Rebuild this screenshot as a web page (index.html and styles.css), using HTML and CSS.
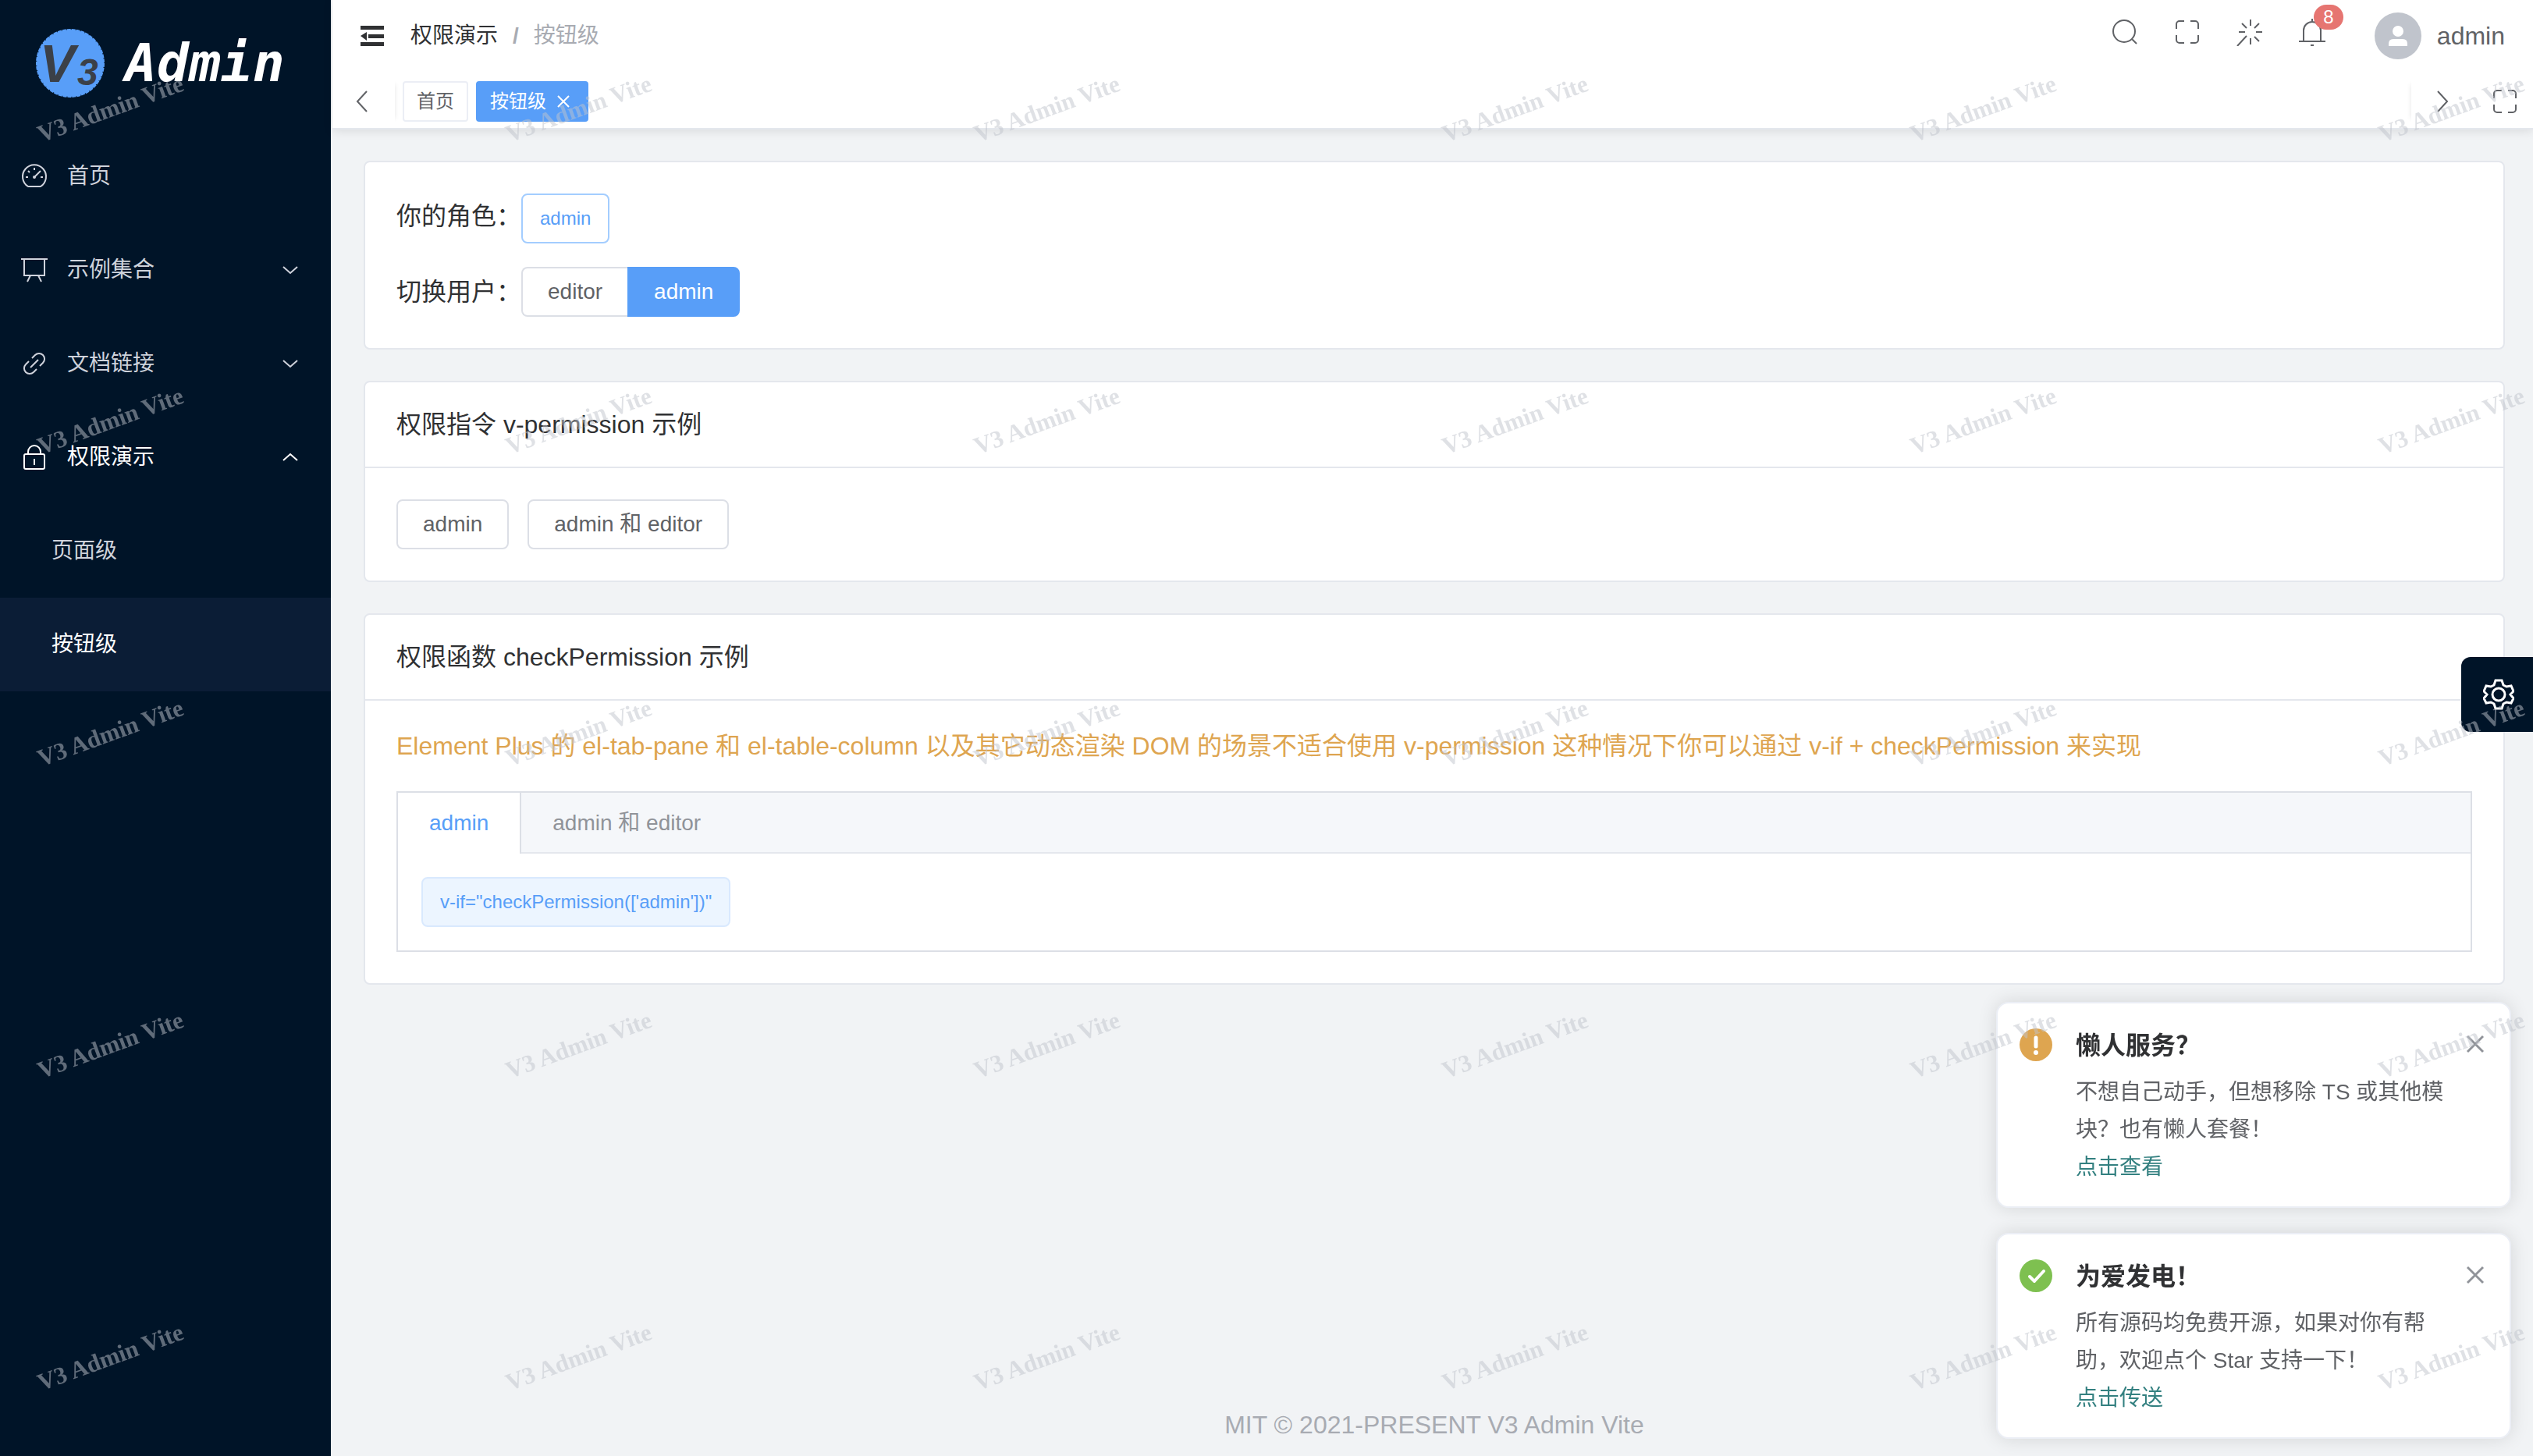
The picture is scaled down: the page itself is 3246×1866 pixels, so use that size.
FILE: index.html
```html
<!DOCTYPE html>
<html lang="zh-CN">
<head>
  <meta charset="UTF-8" />
  <meta name="viewport" content="width=device-width, initial-scale=1" />
  <title>V3 Admin Vite</title>
  <link rel="stylesheet" href="styles.css">
</head>
<body>
  <!-- shared icons -->
  <svg class="sprite" aria-hidden="true">
    <symbol id="icon-fullscreen" viewBox="0 0 36 36">
      <path d="M4 14V8a4 4 0 0 1 4-4h6M22 4h6a4 4 0 0 1 4 4v6M32 22v6a4 4 0 0 1-4 4h-6M14 32H8a4 4 0 0 1-4-4v-6" />
    </symbol>
    <symbol id="icon-down" viewBox="0 0 24 24">
      <path d="M3 8l9 8 9-8" />
    </symbol>
    <symbol id="icon-close" viewBox="0 0 28 28">
      <path d="M7 7l14 14M21 7L7 21" />
    </symbol>
  </svg>

  <aside class="sidebar">
    <a class="logo" href="#" aria-label="V3 Admin">
      <svg class="logo-mark" viewBox="0 0 88 88">
        <circle cx="44" cy="44" r="43" fill="#589ef8" stroke="#589ef8" stroke-width="2" stroke-dasharray="5 1" />
        <text x="5" y="68" class="logo-v">V</text>
        <text x="53" y="72" class="logo-3">3</text>
      </svg>
      <span class="logo-text">Admin</span>
    </a>

    <nav class="menu">
      <a href="#" class="menu-item">
        <svg class="icon" viewBox="0 0 36 36">
          <path d="M10 31a15 15 0 1 1 16 0z" />
          <path d="M18 7v3M7 19h3M26 19h3M10 11l2 2M18 19l8-8" />
          <circle cx="18" cy="19" r="1" />
        </svg>
        <span>首页</span>
      </a>
      <a href="#" class="menu-item">
        <svg class="icon" viewBox="0 0 36 36">
          <path d="M1 4h34M5 4v21h26V4M13 25l-4 8M23 25l4 8" />
        </svg>
        <span>示例集合</span>
        <svg class="icon arrow"><use href="#icon-down" /></svg>
      </a>
      <a href="#" class="menu-item">
        <svg class="icon" viewBox="0 0 36 36">
          <path d="M13 23l10-10M15 11l4-4a7 7 0 0 1 10 10l-4 4M21 25l-4 4A7 7 0 0 1 7 19l4-4" />
        </svg>
        <span>文档链接</span>
        <svg class="icon arrow"><use href="#icon-down" /></svg>
      </a>
      <a href="#" class="menu-item open">
        <svg class="icon" viewBox="0 0 36 36">
          <rect x="5" y="14" width="26" height="19" rx="2" />
          <path d="M10 14v-3a8 8 0 0 1 16 0v3M18 20v8" />
        </svg>
        <span>权限演示</span>
        <svg class="icon arrow"><use href="#icon-down" /></svg>
      </a>
      <a href="#" class="menu-item sub">页面级</a>
      <a href="#" class="menu-item sub active">按钮级</a>
    </nav>
  </aside>

  <div class="page">
    <header class="header">
      <div class="navbar">
        <button class="icon-btn" aria-label="折叠菜单">
          <svg class="fold" viewBox="0 0 30 26">
            <path d="M0 0h30v5H0zM10 11h20v5H10zM0 21h30v5H0zM8 8v11L0 13z" />
          </svg>
        </button>
        <div class="breadcrumb">
          <a href="#">权限演示</a>
          <span class="separator">/</span>
          <span class="current">按钮级</span>
        </div>
        <div class="tools">
          <button class="icon-btn" aria-label="搜索">
            <svg class="icon" viewBox="0 0 36 36"><circle cx="17" cy="17" r="14" /><path d="M27 27l6 6" /></svg>
          </button>
          <button class="icon-btn" aria-label="全屏">
            <svg class="icon"><use href="#icon-fullscreen" /></svg>
          </button>
          <button class="icon-btn" aria-label="主题">
            <svg class="icon" viewBox="0 0 36 36">
              <path d="M19 2v8M19 26v8M4 18h8M26 18h8M8 7l6 6M30 7l-6 6M24 24l6 6M14 23L2 36" />
            </svg>
          </button>
          <button class="icon-btn bell" aria-label="通知">
            <svg class="icon" viewBox="0 0 36 36">
              <path d="M1 30h34M7 30V16a11 11 0 0 1 22 0v14M18 1v4M16 35h4" />
            </svg>
            <span class="badge">8</span>
          </button>
          <a href="#" class="user">
            <svg class="avatar" viewBox="0 0 60 60">
              <circle cx="30" cy="30" r="30" fill="#c0c4cc" />
              <circle cx="30" cy="24" r="7" fill="#fff" />
              <path d="M18 43v-3q0-6 6-6h12q6 0 6 6v3z" fill="#fff" />
            </svg>
            <span>admin</span>
          </a>
        </div>
      </div>

      <div class="tags-bar">
        <button class="icon-btn scroll-btn left" aria-label="向左">
          <svg class="icon" viewBox="0 0 36 36"><path d="M24 5L12 18l12 13" /></svg>
        </button>
        <div class="tags">
          <a href="#" class="page-tag">首页</a>
          <a href="#" class="page-tag active">按钮级<svg class="icon close"><use href="#icon-close" /></svg></a>
        </div>
        <div class="tags-right">
          <button class="icon-btn" aria-label="向右">
            <svg class="icon" viewBox="0 0 36 36"><path d="M12 5l12 13-12 13" /></svg>
          </button>
          <button class="icon-btn" aria-label="内容区全屏">
            <svg class="icon"><use href="#icon-fullscreen" /></svg>
          </button>
        </div>
      </div>
    </header>

    <main class="content">
      <section class="card">
        <div class="card-body roles">
          <div class="role-row text-row">
            <span>你的角色：</span>
            <span class="tag plain">admin</span>
          </div>
          <div class="role-row">
            <span id="switch-label">切换用户：</span>
            <div class="radio-group" role="radiogroup" aria-labelledby="switch-label">
              <input type="radio" name="role" id="role-editor">
              <label for="role-editor">editor</label>
              <input type="radio" name="role" id="role-admin" checked>
              <label for="role-admin">admin</label>
            </div>
          </div>
        </div>
      </section>

      <section class="card">
        <div class="card-header">权限指令 v-permission 示例</div>
        <div class="card-body buttons">
          <button class="btn">admin</button>
          <button class="btn">admin 和 editor</button>
        </div>
      </section>

      <section class="card">
        <div class="card-header">权限函数 checkPermission 示例</div>
        <div class="card-body">
          <p class="warning">Element Plus 的 el-tab-pane 和 el-table-column 以及其它动态渲染 DOM 的场景不适合使用 v-permission 这种情况下你可以通过 v-if + checkPermission 来实现</p>
          <div class="tabs">
            <div class="tabs-header" role="tablist">
              <button class="tab active" role="tab" aria-selected="true">admin</button>
              <button class="tab" role="tab" aria-selected="false">admin 和 editor</button>
            </div>
            <div class="tabs-content" role="tabpanel">
              <span class="tag">v-if="checkPermission(['admin'])"</span>
            </div>
          </div>
        </div>
      </section>
    </main>

    <footer class="footer">MIT © 2021-PRESENT V3 Admin Vite</footer>
  </div>

  <button class="settings" aria-label="设置">
    <svg class="icon" viewBox="0 0 40 40">
      <path d="M16 2h8l2 6 4 2 6-1 3 7-4 4 4 5-3 6-6-1-4 2-2 6h-8l-2-6-4-2-6 1-3-6 4-5-4-4 3-7 6 1 4-2z" />
      <circle cx="20" cy="20" r="8" />
    </svg>
  </button>

  <div class="notifications">
    <div class="notice" role="alert">
      <svg class="notice-icon" viewBox="0 0 42 42">
        <circle cx="21" cy="21" r="21" fill="#dea550" />
        <path d="M21 12v11" stroke="#fff" stroke-width="5" stroke-linecap="round" />
        <circle cx="21" cy="31" r="3" fill="#fff" />
      </svg>
      <div class="notice-text">
        <h2>懒人服务？</h2>
        <p>不想自己动手，但想移除 TS 或其他模块？也有懒人套餐！</p>
        <a href="#">点击查看</a>
      </div>
      <button class="icon-btn notice-close" aria-label="关闭">
        <svg class="icon"><use href="#icon-close" /></svg>
      </button>
    </div>
    <div class="notice" role="alert">
      <svg class="notice-icon" viewBox="0 0 42 42">
        <circle cx="21" cy="21" r="21" fill="#7ec050" />
        <path d="M13 22l6 6 12-13" fill="none" stroke="#fff" stroke-width="4" stroke-linecap="round" stroke-linejoin="round" />
      </svg>
      <div class="notice-text">
        <h2>为爱发电！</h2>
        <p>所有源码均免费开源，如果对你有帮助，欢迎点个 Star 支持一下！</p>
        <a href="#">点击传送</a>
      </div>
      <button class="icon-btn notice-close" aria-label="关闭">
        <svg class="icon"><use href="#icon-close" /></svg>
      </button>
    </div>
  </div>

  <svg class="watermark" aria-hidden="true">
    <defs>
      <pattern id="mark" width="600" height="400" patternUnits="userSpaceOnUse">
        <text x="145" y="149" text-anchor="middle" transform="rotate(-20 145 149)">V3 Admin Vite</text>
      </pattern>
    </defs>
    <rect width="100%" height="100%" fill="url(#mark)" />
  </svg>
</body>
</html>
```

FILE: styles.css
```css
:root {
  --primary: #589ef8;
  --text: #303133;
  --text-regular: #606266;
  --text-muted: #909399;
  --placeholder: #a8abb2;
  --border: #dcdfe6;
  --border-light: #e4e7ed;
  --bg: #f1f3f5;
  --sidebar-bg: #001428;
  --sidebar-active: #0b1d36;
  --radius: 8px;
}

* {
  box-sizing: border-box;
}

body {
  margin: 0;
  min-height: 100vh;
  display: flex;
  background: var(--bg);
  color: var(--text);
  font-family: "Liberation Sans", "Noto Sans CJK SC", sans-serif;
  font-size: 32px;
  line-height: 36px;
}

a {
  color: inherit;
  text-decoration: none;
}

button {
  font: inherit;
  color: inherit;
  cursor: pointer;
}

.sprite {
  position: absolute;
  width: 0;
  height: 0;
}

.icon {
  display: block;
  width: 36px;
  height: 36px;
  flex: none;
  fill: none;
  stroke: currentColor;
  stroke-width: 2;
}

.icon-btn {
  display: flex;
  padding: 0;
  border: none;
  background: none;
  color: var(--text-regular);
}

/* sidebar */
.sidebar {
  width: 424px;
  flex: none;
  background: var(--sidebar-bg);
}

.logo {
  display: flex;
  align-items: center;
  gap: 26px;
  height: 166px;
  padding: 0 0 4px 46px;
  color: #fff;
}

.logo-mark {
  width: 88px;
  height: 88px;
}

.logo-v,
.logo-3 {
  font-family: "Liberation Sans Narrow", "Liberation Sans", sans-serif;
  font-weight: 700;
  font-style: italic;
  fill: #3b4048;
}

.logo-v {
  font-size: 68px;
}

.logo-3 {
  font-size: 48px;
}

.logo-text {
  font-family: "DejaVu Sans Mono", monospace;
  font-size: 68px;
  font-weight: 700;
  font-style: italic;
  line-height: 80px;
}

.menu-item {
  display: flex;
  align-items: center;
  gap: 24px;
  height: 120px;
  padding: 0 40px 0 26px;
  color: #cfd3dc;
  font-size: 28px;
}

.menu-item .arrow {
  width: 24px;
  height: 24px;
  margin-left: auto;
}

.menu-item.open {
  color: #fff;
}

.menu-item.open .arrow {
  transform: rotate(180deg);
}

.menu-item.sub {
  padding-left: 66px;
}

.menu-item.active {
  background: var(--sidebar-active);
  color: #fff;
}

/* header */
.page {
  flex: 1;
  min-width: 0;
  margin-left: 2px;
  display: flex;
  flex-direction: column;
}

.header {
  background: #fff;
  border-bottom: 2px solid var(--border-light);
  box-shadow: 0 2px 12px rgba(0, 0, 0, 0.1);
}

.navbar {
  display: flex;
  align-items: center;
  height: 92px;
  padding: 0 36px;
}

.fold {
  width: 30px;
  height: 26px;
  fill: var(--text);
}

.breadcrumb {
  display: flex;
  gap: 19px;
  margin-left: 34px;
  font-size: 28px;
}

.separator {
  color: var(--placeholder);
  font-weight: 700;
}

.current {
  color: var(--placeholder);
}

.tools {
  display: flex;
  align-items: center;
  gap: 44px;
  margin-left: auto;
}

.tools > .icon-btn {
  padding-bottom: 10px;
}

.bell {
  position: relative;
}

.badge {
  position: absolute;
  top: -17px;
  left: 20px;
  width: 38px;
  height: 32px;
  border-radius: 16px;
  background: #e67571;
  color: #fff;
  font-size: 24px;
  line-height: 32px;
  text-align: center;
}

.user {
  display: flex;
  align-items: center;
  gap: 20px;
  margin-left: 18px;
  color: var(--text-regular);
}

.avatar {
  width: 60px;
  height: 60px;
}

.tags-bar {
  display: flex;
  align-items: center;
  height: 72px;
  padding-top: 4px;
}

.scroll-btn {
  height: 56px;
  align-items: center;
  padding: 0 24px 0 20px;
}

.scroll-btn.left {
  box-shadow: 6px 0 6px -6px rgba(0, 0, 0, 0.1);
}

.tags {
  display: flex;
  gap: 10px;
  flex: 1;
  padding-left: 10px;
}

.page-tag {
  display: flex;
  align-items: center;
  gap: 8px;
  height: 52px;
  padding: 0 16px;
  border: 2px solid #ebeef5;
  border-radius: 4px;
  color: var(--text-regular);
  font-size: 24px;
}

.page-tag.active {
  background: var(--primary);
  border-color: var(--primary);
  color: #fff;
}

.page-tag .close {
  width: 28px;
  height: 28px;
}

.tags-right {
  display: flex;
  align-items: center;
  gap: 44px;
  height: 56px;
  padding: 0 18px 0 22px;
  box-shadow: -6px 0 6px -6px rgba(0, 0, 0, 0.1);
}

/* content */
.content {
  display: flex;
  flex-direction: column;
  gap: 40px;
  padding: 40px 36px 40px 40px;
}

.card {
  background: #fff;
  border: 2px solid var(--border-light);
  border-radius: var(--radius);
}

.card-header {
  padding: 36px 40px;
  border-bottom: 2px solid var(--border-light);
}

.card-body {
  padding: 40px;
}

.roles {
  display: flex;
  flex-direction: column;
  gap: 30px;
}

.role-row {
  display: flex;
  align-items: center;
  height: 64px;
}

.text-row {
  align-items: baseline;
}

.tag {
  display: inline-block;
  height: 64px;
  padding: 0 22px;
  border: 2px solid #d9e9fe;
  border-radius: var(--radius);
  background: #ecf5ff;
  color: var(--primary);
  font-size: 24px;
  line-height: 60px;
}

.tag.plain {
  background: #fff;
  border-color: #a3cdff;
}

.radio-group {
  display: flex;
  position: relative;
}

.radio-group input {
  position: absolute;
  opacity: 0;
}

.radio-group label,
.btn {
  height: 64px;
  padding: 0 32px;
  border: 2px solid var(--border);
  background: #fff;
  color: var(--text-regular);
  font-size: 28px;
  line-height: 60px;
  cursor: pointer;
}

.radio-group label:first-of-type {
  border-right: none;
  border-radius: var(--radius) 0 0 var(--radius);
}

.radio-group label:last-of-type {
  border-radius: 0 var(--radius) var(--radius) 0;
}

.radio-group input:checked + label {
  background: var(--primary);
  border-color: var(--primary);
  color: #fff;
}

.buttons {
  display: flex;
  gap: 24px;
}

.btn {
  border-radius: var(--radius);
}

.warning {
  margin: 0 0 40px;
  color: #dea550;
}

.tabs {
  border: 2px solid var(--border);
}

.tabs-header {
  display: flex;
  height: 78px;
  background: #f5f7fa;
  box-shadow: inset 0 -2px var(--border-light);
}

.tab {
  padding: 0 40px;
  border: none;
  background: none;
  color: var(--text-muted);
  font-size: 28px;
}

.tab.active {
  background: #fff;
  border-right: 2px solid var(--border);
  color: var(--primary);
}

.tabs-content {
  display: flex;
  padding: 30px;
}

.footer {
  margin-top: auto;
  padding: 0 36px 18px 40px;
  color: var(--placeholder);
  line-height: 44px;
  text-align: center;
}

/* floating parts */
.settings {
  position: fixed;
  top: 842px;
  right: 0;
  width: 92px;
  height: 96px;
  padding: 0 24px 0 28px;
  border: none;
  border-radius: 12px 0 0 12px;
  background: var(--sidebar-bg);
  color: #fff;
}

.settings .icon {
  width: 40px;
  height: 40px;
  stroke-width: 3;
}

.notifications {
  position: fixed;
  right: 28px;
  bottom: 22px;
  display: flex;
  flex-direction: column;
  gap: 32px;
}

.notice {
  display: flex;
  align-items: flex-start;
  width: 660px;
  padding: 30px 24px 26px 28px;
  border: 2px solid #ebeef5;
  border-radius: 16px;
  background: #fff;
  box-shadow: 0 0 24px rgba(0, 0, 0, 0.12);
}

.notice-icon {
  width: 42px;
  height: 42px;
  margin-top: 2px;
  flex: none;
}

.notice-text {
  flex: 1;
  margin-left: 30px;
  color: var(--text-regular);
  font-size: 28px;
  line-height: 48px;
}

.notice-text h2 {
  margin: 0 0 12px;
  color: var(--text);
  font-size: 32px;
  font-weight: 700;
  line-height: 48px;
}

.notice-text p {
  margin: 0;
}

.notice-text a {
  color: #338080;
}

.notice-close {
  margin: 2px 0 0;
  color: var(--text-muted);
}

.notice-close .icon {
  width: 40px;
  height: 40px;
}

.watermark {
  position: fixed;
  inset: 0;
  width: 100%;
  height: 100%;
  pointer-events: none;
}

.watermark text {
  font-family: "Liberation Serif", serif;
  font-size: 31px;
  font-weight: 700;
  fill: #c0c4cc;
  fill-opacity: 0.5;
}
```
